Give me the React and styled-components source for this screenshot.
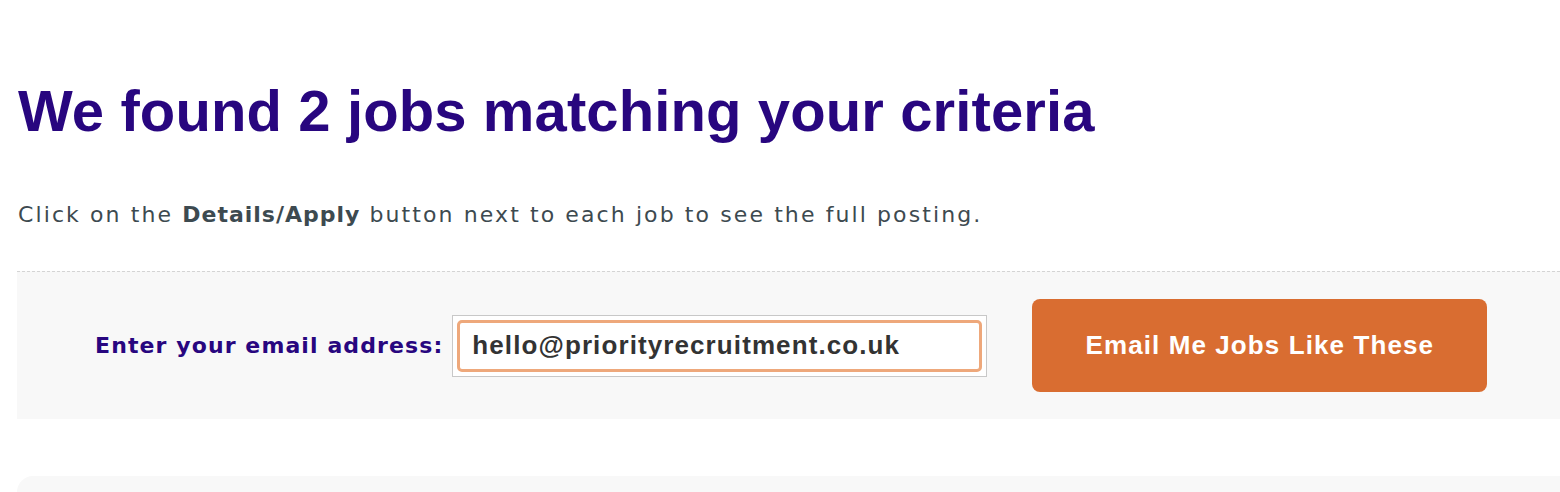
import React, { useEffect, useRef } from "react";
import styled, { createGlobalStyle } from "styled-components";

const GlobalStyle = createGlobalStyle`
  body {
    margin: 0;
    background: #fff;
    font-family: "Liberation Sans", Arial, sans-serif;
  }
`;

const Page = styled.div`
  padding: 76px 0 0 17px;
  overflow: hidden;
  height: 492px;
  box-sizing: border-box;
`;

const Heading = styled.h1`
  margin: 0 0 0 1px;
  font-size: 58px;
  line-height: 70px;
  font-weight: 700;
  color: #28067f;
  letter-spacing: 0.12px;
`;

const Intro = styled.p`
  margin: 54px 0 0 1px;
  font-family: "DejaVu Sans", sans-serif;
  font-size: 22px;
  line-height: 30px;
  color: #3d4a50;
  letter-spacing: 2.1px;
  b {
    font-weight: 700;
    letter-spacing: 1px;
  }
`;

const AlertBar = styled.form`
  margin-top: 41px;
  border-top: 1px dashed #d4d4d4;
  background: #f8f8f8;
  height: 147px;
  display: flex;
  align-items: center;
  padding-left: 78px;
`;

const Label = styled.label`
  font-family: "DejaVu Sans", sans-serif;
  font-size: 22px;
  font-weight: 700;
  letter-spacing: 1.1px;
  color: #28067f;
  margin-right: 9px;
`;

const InputFrame = styled.div`
  border: 1px solid #c8c8c8;
  padding: 4px;
  background: #fff;
`;

const EmailInput = styled.input`
  display: block;
  width: 525px;
  height: 52px;
  box-sizing: border-box;
  border: 3px solid #eea87b;
  border-radius: 5px;
  padding: 0 12px;
  font-family: "Liberation Sans", Arial, sans-serif;
  font-size: 26px;
  font-weight: 700;
  letter-spacing: 1.1px;
  color: #333;
  caret-color: #222;
  outline: none;
`;

const SubmitButton = styled.button`
  margin-left: 45px;
  width: 455px;
  height: 93px;
  border: none;
  border-radius: 8px;
  background: #d96d31;
  color: #fff;
  font-family: "Liberation Sans", Arial, sans-serif;
  font-size: 26px;
  font-weight: 700;
  letter-spacing: 1.1px;
  cursor: pointer;
  margin-bottom: 1px;
`;

const ResultsCard = styled.div`
  margin-top: 57px;
  height: 40px;
  background: #f8f8f8;
  border-radius: 16px 0 0 0;
`;

export default function App() {
  const emailRef = useRef(null);

  useEffect(() => {
    const el = emailRef.current;
    if (el) {
      el.focus();
      el.setSelectionRange(el.value.length, el.value.length);
    }
  }, []);

  return (
    <>
      <GlobalStyle />
      <Page>
        <Heading>We found 2 jobs matching your criteria</Heading>
        <Intro>
          Click on the <b>Details/Apply</b> button next to each job to see the full posting.
        </Intro>
        <AlertBar onSubmit={(e) => e.preventDefault()}>
          <Label htmlFor="email">Enter your email address:</Label>
          <InputFrame>
            <EmailInput
              ref={emailRef}
              id="email"
              type="text"
              defaultValue="hello@priorityrecruitment.co.uk"
            />
          </InputFrame>
          <SubmitButton type="submit">Email Me Jobs Like These</SubmitButton>
        </AlertBar>
        <ResultsCard />
      </Page>
    </>
  );
}
